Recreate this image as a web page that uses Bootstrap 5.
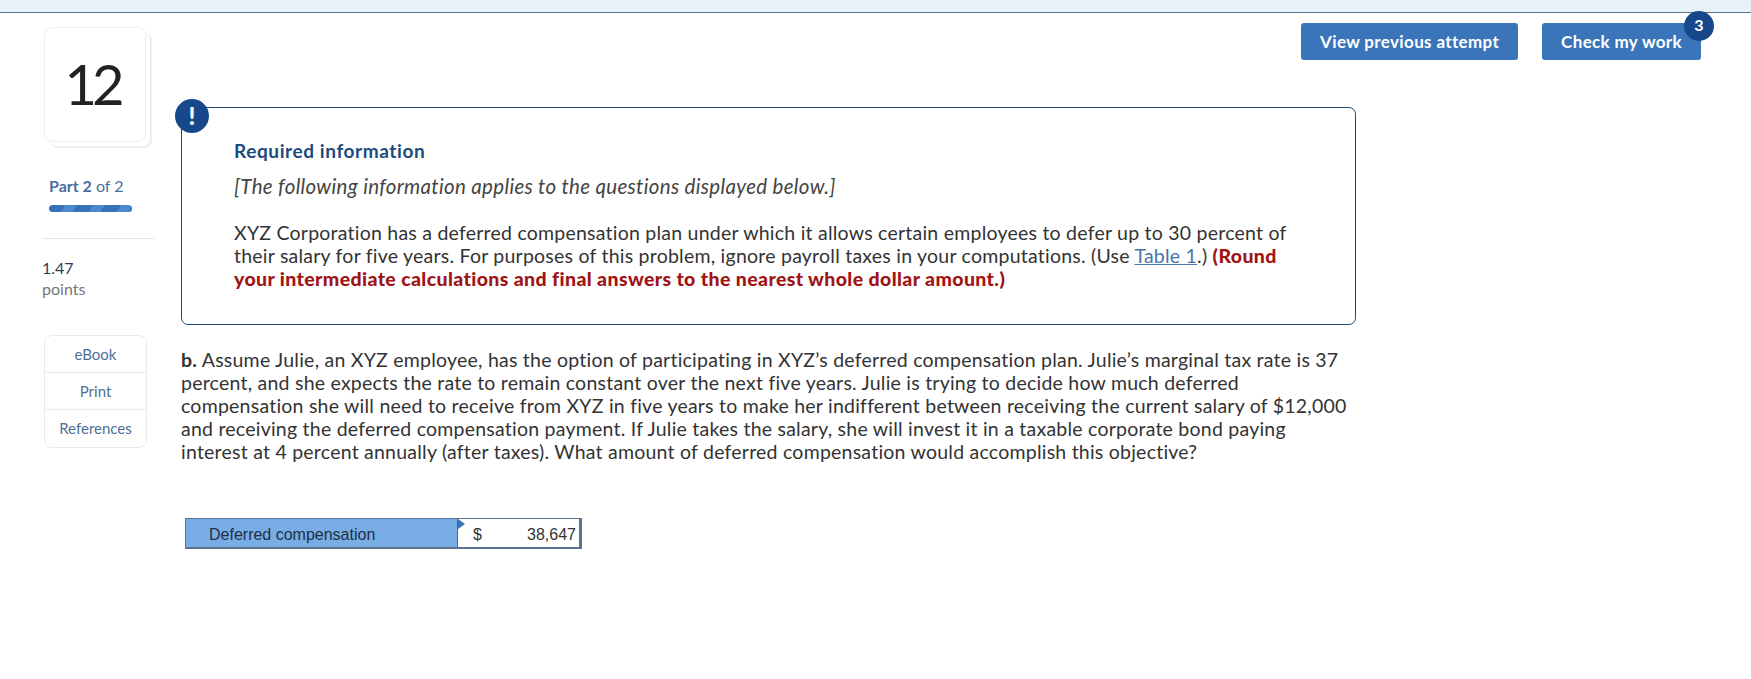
<!DOCTYPE html>
<html lang="en">
<head>
  <meta charset="UTF-8" />
  <meta name="viewport" content="width=device-width, initial-scale=1.0"/>
  <title>Question 12</title>
  <link href="https://cdn.jsdelivr.net/npm/bootstrap@5.3.0/dist/css/bootstrap.min.css" rel="stylesheet"/>
  <style>
    body {
      font-family: Lato, "Open Sans", sans-serif;
      color: #333;
      background: #fff;
      overflow: hidden;
    }
    .top-strip {
      height: 13px;
      background: #e8f0f8;
      border-bottom: 1px solid #5d7286;
    }
    .page-wrap {
      padding: 10px 50px 0 42px;
    }
    .side-col {
      width: 139px;
      padding-top: 4px;
      flex-shrink: 0;
    }
    .num-stack {
      width: 102px;
      height: 115px;
      margin-left: 2px;
      padding: 0 6px 2px 0;
      background: #fff;
      border: 1px solid #eee;
      border-radius: 8px;
      box-shadow: 5px 5px 0 -1px #fff, 6px 6px 0 0 #eee;
      font-size: 56px;
      letter-spacing: -5px;
      color: #222;
      line-height: 1;
    }
    .part-label {
      margin: 35px 0 0 7px;
      font-size: 16px;
      line-height: 18px;
      color: #4a6f9c;
    }
    .part-bar {
      width: 83px;
      height: 7px;
      margin: 10px 0 0 7px;
      border-radius: 4px;
      background: repeating-linear-gradient(120deg, #3671b5 0 14px, #4a8bd0 14px 24px);
    }
    .side-rule {
      width: 113px;
      margin: 26px 0 0 0;
      border-top: 1px solid #e6e6e6;
      opacity: 1;
    }
    .score {
      margin-top: 18px;
      font-size: 16px;
      line-height: 22px;
      color: #2b3f55;
    }
    .score-sub {
      font-size: 16px;
      line-height: 19px;
      color: #777;
    }
    .tool-list {
      width: 103px;
      margin: 37px 0 0 2px;
      border: 1px solid #eaeaea;
      border-radius: 8px;
    }
    .tool-list .list-group-item {
      padding: 0;
      height: 37px;
      border: 0;
      border-bottom: 1px solid #eaeaea;
      color: #4e7099;
      font-size: 15px;
      line-height: 37px;
      text-align: center;
      background: transparent;
    }
    .tool-list .list-group-item:last-child {
      border-bottom: 0;
    }
    .action-btn {
      height: 37px;
      padding: 0 19px;
      background: #3a74b9;
      border: 0;
      border-radius: 3px;
      color: #fff;
      font-size: 17px;
      font-weight: 700;
      letter-spacing: .35px;
      line-height: 35px;
    }
    .btn-count {
      top: -12px;
      right: -13px;
      width: 30px;
      height: 30px;
      border-radius: 50%;
      background: #17498a;
      color: #fff;
      font-size: 16px;
      font-weight: 700;
      line-height: 28px;
      text-align: center;
    }
    .info-box {
      width: 1175px;
      height: 218px;
      margin-top: 47px;
      padding: 31px 20px 0 52px;
      border: 1px solid #1c4a7a;
      border-radius: 7px;
    }
    .alert-dot {
      top: -9px;
      left: -7px;
      width: 34px;
      height: 34px;
      border-radius: 50%;
      background: #17498a;
      color: #fff;
      font-size: 24px;
      font-weight: 900;
      line-height: 33px;
      text-align: center;
    }
    .info-title {
      margin: 0;
      font-size: 19px;
      font-weight: 700;
      letter-spacing: .6px;
      line-height: 23px;
      color: #1b4a7d;
    }
    .info-note {
      margin: 13px 0 23px;
      font-size: 20.5px;
      font-style: italic;
      letter-spacing: .33px;
      line-height: 23px;
      color: #444;
    }
    .body-copy {
      margin: 0;
      font-size: 19.5px;
      letter-spacing: .23px;
      line-height: 23px;
      color: #333;
    }
    .info-red {
      color: #a01414;
      font-weight: 900;
      letter-spacing: .38px;
    }
    .table-ref {
      color: #4a73a8;
      text-decoration-thickness: 1px;
    }
    .question-copy {
      margin-top: 23px;
      white-space: nowrap;
    }
    .answer-row {
      width: 397px;
      height: 31px;
      margin: 55px 0 0 4px;
      border: 1px solid #5b7491;
      border-bottom-width: 2px;
      font-family: "Liberation Sans", Arial, sans-serif;
      font-size: 16px;
      line-height: 31px;
    }
    .answer-label {
      width: 272px;
      padding-left: 23px;
      background: #79ade5;
      color: #1e2f45;
      border-right: 1px solid #42668f;
    }
    .answer-cell {
      padding: 0 3px 0 15px;
      border-right: 2px solid #5b7491;
      color: #333;
    }
    .answer-cell::before {
      content: "";
      position: absolute;
      top: 0;
      left: 0;
      border-top: 5px solid transparent;
      border-bottom: 5px solid transparent;
      border-left: 7px solid #3a74b9;
    }
  </style>
</head>
<body>
  <div class="top-strip"></div>

  <div class="page-wrap d-flex">
    <!-- Left column -->
    <div class="side-col">
      <div class="num-stack d-flex align-items-center justify-content-center">12</div>
      <div class="part-label"><strong>Part 2</strong> of 2</div>
      <div class="part-bar"></div>
      <hr class="side-rule">
      <div class="score">1.47</div>
      <div class="score-sub">points</div>
      <ul class="tool-list list-group">
        <li class="list-group-item">eBook</li>
        <li class="list-group-item">Print</li>
        <li class="list-group-item">References</li>
      </ul>
    </div>

    <!-- Main column -->
    <div class="flex-grow-1">
      <div class="d-flex justify-content-end gap-4">
        <button type="button" class="action-btn btn">View previous attempt</button>
        <button type="button" class="action-btn btn position-relative">Check my work
          <span class="btn-count position-absolute">3</span>
        </button>
      </div>

      <div class="info-box position-relative">
        <div class="alert-dot position-absolute">!</div>
        <h6 class="info-title">Required information</h6>
        <p class="info-note">[The following information applies to the questions displayed below.]</p>
        <p class="body-copy">XYZ Corporation has a deferred compensation plan under which it allows certain employees to defer up to 30 percent of<br>their salary for five years. For purposes of this problem, ignore payroll taxes in your computations. (Use <a href="#" class="table-ref">Table 1</a>.) <span class="info-red">(Round<br>your intermediate calculations and final answers to the nearest whole dollar amount.)</span></p>
      </div>

      <p class="body-copy question-copy"><strong>b.</strong> Assume Julie, an XYZ employee, has the option of participating in XYZ’s deferred compensation plan. Julie’s marginal tax rate is 37<br>percent, and she expects the rate to remain constant over the next five years. Julie is trying to decide how much deferred<br>compensation she will need to receive from XYZ in five years to make her indifferent between receiving the current salary of $12,000<br>and receiving the deferred compensation payment. If Julie takes the salary, she will invest it in a taxable corporate bond paying<br>interest at 4 percent annually (after taxes). What amount of deferred compensation would accomplish this objective?</p>

      <div class="answer-row d-flex">
        <div class="answer-label">Deferred compensation</div>
        <div class="answer-cell flex-grow-1 d-flex justify-content-between position-relative"><span>$</span><span>38,647</span></div>
      </div>
    </div>
  </div>
</body>
</html>
